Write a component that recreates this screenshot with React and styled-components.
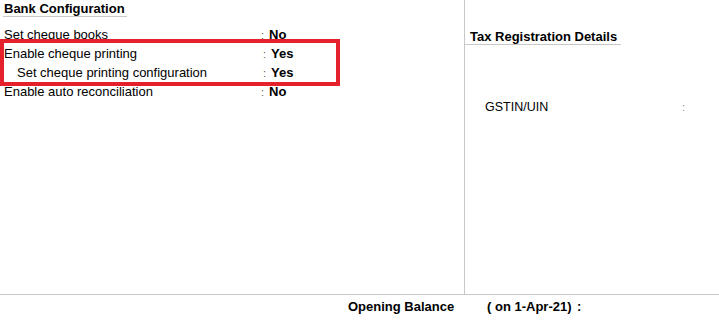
import React from "react";
import styled, { createGlobalStyle } from "styled-components";

const Global = createGlobalStyle`
  html, body { margin: 0; padding: 0; background: #fff; }
  body { font-family: "Liberation Sans", Arial, sans-serif; font-size: 13px; color: #000; }
`;

const Page = styled.div`
  width: 719px;
  height: 320px;
  display: flex;
  flex-direction: column;
  overflow: hidden;
  background: #fff;
`;

const Main = styled.div`
  height: 294px;
  display: grid;
  grid-template-columns: 464px 1fr;
`;

const LeftPanel = styled.section`
  position: relative;
`;

const RightPanel = styled.section`
  border-left: 1px solid #c8c8c8;
`;

const TitleWrap = styled.div`
  padding-left: ${(p) => p.$left || 0}px;
  padding-top: ${(p) => p.$top || 0}px;
`;

const Title = styled.h2`
  display: inline-block;
  margin: 0;
  font-size: 13px;
  font-weight: bold;
  line-height: 15px;
  padding: 1px ${(p) => p.$padRight}px 0 ${(p) => p.$padLeft}px;
  border-bottom: 1px solid #c8c8c8;
`;

const Rows = styled.div`
  margin-top: 8px;
  display: flex;
  flex-direction: column;
`;

const Row = styled.div`
  display: flex;
  align-items: baseline;
  height: 19px;
  line-height: 19px;
  padding-left: 4px;
  white-space: nowrap;
`;

const Label = styled.span`
  width: ${(p) => 257 + (p.$shift || 0) - (p.$indent || 0)}px;
  padding-left: ${(p) => p.$indent || 0}px;
  flex: none;
`;

const Colon = styled.span`
  width: 8px;
  flex: none;
  color: #6e5a36;
  font-size: 11px;
`;

const Value = styled.span`
  font-weight: bold;
`;

const Highlight = styled.div`
  position: absolute;
  left: 0;
  top: 39px;
  width: 340px;
  height: 47px;
  border: 4px solid #e5212b;
  box-sizing: border-box;
  pointer-events: none;
`;

const TaxRow = styled.div`
  margin-top: 54px;
  padding-left: 20px;
  display: flex;
  line-height: 16px;
  font-size: 12.5px;
  white-space: nowrap;
`;

const TaxLabel = styled.span`
  width: 197px;
  flex: none;
`;

const TaxColon = styled.span`
  color: #8a8a8a;
  font-size: 11px;
`;

const Footer = styled.footer`
  flex: 1;
  border-top: 1px solid #c8c8c8;
  display: flex;
  align-items: flex-start;
  padding: 4px 0 0 348px;
  line-height: 16px;
  font-weight: bold;
  white-space: nowrap;
`;

const FooterCell = styled.span`
  width: ${(p) => p.$w}px;
  flex: none;
`;

const rows = [
  { label: "Set cheque books", value: "No" },
  { label: "Enable cheque printing", value: "Yes", shift: 2 },
  { label: "Set cheque printing configuration", value: "Yes", shift: 2, indent: 13 },
  { label: "Enable auto reconciliation", value: "No" },
];

export default function App() {
  return (
    <Page>
      <Global />
      <Main>
        <LeftPanel>
          <TitleWrap $left={3}>
            <Title $padLeft={1} $padRight={2}>Bank Configuration</Title>
          </TitleWrap>
          <Rows>
            {rows.map((r) => (
              <Row key={r.label}>
                <Label $shift={r.shift} $indent={r.indent}>{r.label}</Label>
                <Colon>:</Colon>
                <Value>{r.value}</Value>
              </Row>
            ))}
          </Rows>
          <Highlight />
        </LeftPanel>
        <RightPanel>
          <TitleWrap $top={28}>
            <Title $padLeft={5} $padRight={4}>Tax Registration Details</Title>
          </TitleWrap>
          <TaxRow>
            <TaxLabel>GSTIN/UIN</TaxLabel>
            <TaxColon>:</TaxColon>
          </TaxRow>
        </RightPanel>
      </Main>
      <Footer>
        <FooterCell $w={139}>Opening Balance</FooterCell>
        <FooterCell $w={90}>( on 1-Apr-21)</FooterCell>
        <FooterCell $w={10}>:</FooterCell>
      </Footer>
    </Page>
  );
}
